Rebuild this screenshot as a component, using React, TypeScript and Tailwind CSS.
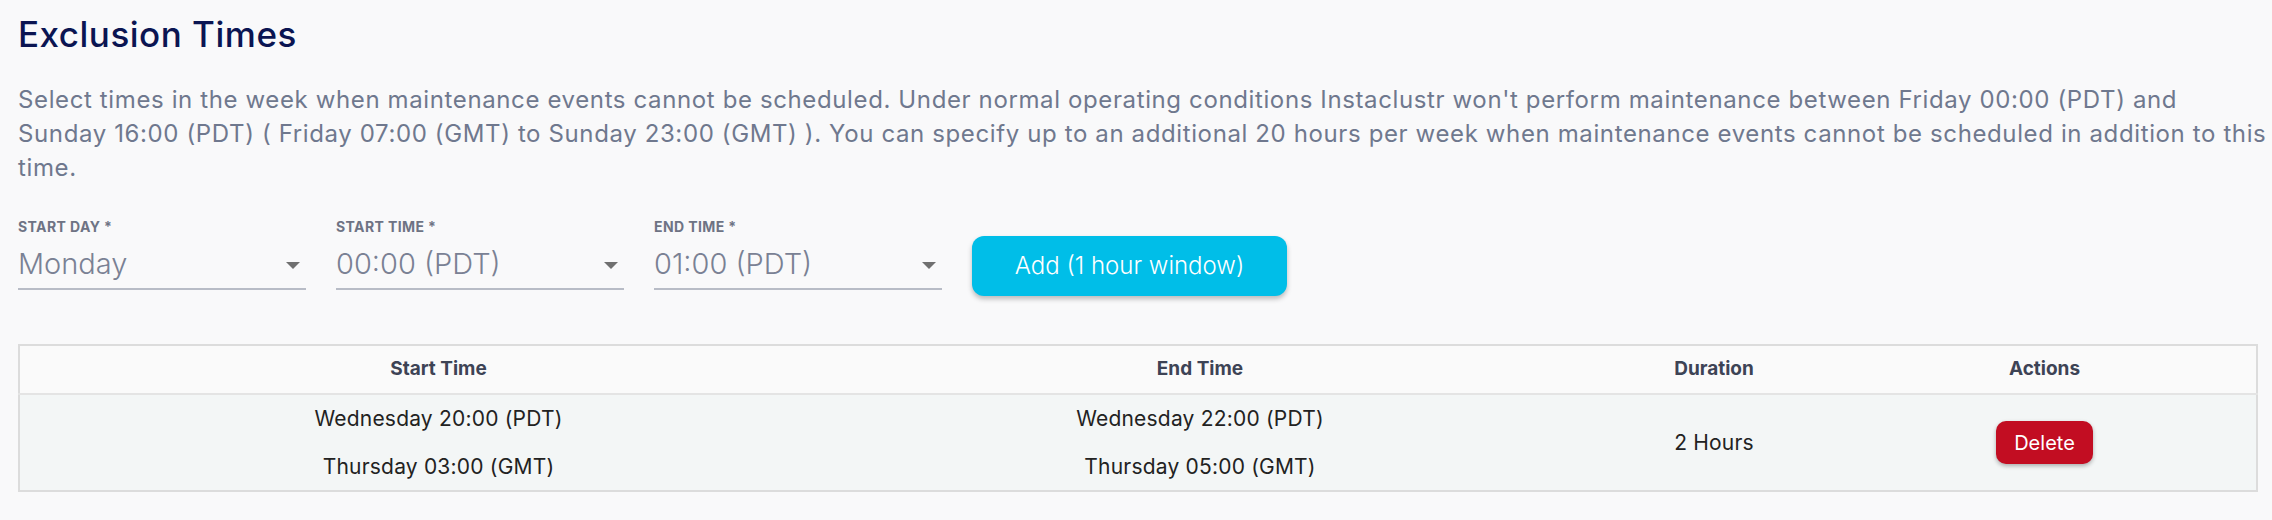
import { useState } from "react";

const font = { fontFamily: "Inter, 'Noto Sans', sans-serif" };

type Exclusion = {
  startLocal: string;
  startGmt: string;
  endLocal: string;
  endGmt: string;
  duration: string;
};

function SelectField({ label, value }: { label: string; value: string }) {
  return (
    <div className="w-[288px] flex flex-col">
      <span className="text-[14px] leading-[16px] font-bold uppercase text-[#6e7384] tracking-[0.4px]">
        {label}
      </span>
      <div className="mt-[11px] flex items-center justify-between border-b-2 border-[#b8bcc6] pb-[6px]">
        <span className="text-[29px] leading-[36px] font-light text-[#7a8194]">{value}</span>
        <svg width="14" height="7" viewBox="0 0 14 7" className="mr-[6px] mt-[2px]">
          <path d="M0 0 L14 0 L7 7 Z" fill="#707070" />
        </svg>
      </div>
    </div>
  );
}

export default function App() {
  const [rows, setRows] = useState<Exclusion[]>([
    {
      startLocal: "Wednesday 20:00 (PDT)",
      startGmt: "Thursday 03:00 (GMT)",
      endLocal: "Wednesday 22:00 (PDT)",
      endGmt: "Thursday 05:00 (GMT)",
      duration: "2 Hours",
    },
  ]);

  return (
    <div className="w-full h-[520px] bg-[#f9f9fa] pl-[18px] pt-[12px]" style={font}>
      <h1 className="text-[35px] leading-[44px] font-medium text-[#0b1552] tracking-[0.5px]">
        Exclusion Times
      </h1>
      <p className="mt-[27px] text-[24px] leading-[34px] text-[#6f788e] tracking-[0.62px]">
        Select times in the week when maintenance events cannot be scheduled. Under normal operating
        conditions Instaclustr won't perform maintenance between Friday 00:00 (PDT) and Sunday 16:00
        (PDT) ( Friday 07:00 (GMT) to Sunday 23:00 (GMT) ). You can specify up to an additional 20
        hours per week when maintenance events cannot be scheduled in addition to this time.
      </p>

      <div className="mt-[34px] flex items-start gap-[30px]">
        <SelectField label="Start Day *" value="Monday" />
        <SelectField label="Start Time *" value="00:00 (PDT)" />
        <SelectField label="End Time *" value="01:00 (PDT)" />
        <button
          className="mt-[17px] w-[315px] h-[60px] rounded-[12px] bg-[#00bee8] text-white text-[24px] font-light shadow-[0_3px_5px_rgba(0,0,0,0.25)]"
          onClick={() => setRows(rows)}
        >
          Add (1 hour window)
        </button>
      </div>

      <table className="mt-[48px] w-[2240px] table-fixed border-collapse border-2 border-[#dcdcdc]">
        <colgroup>
          <col className="w-[810px]" />
          <col className="w-[742px]" />
          <col className="w-[286px]" />
          <col className="w-[400px]" />
        </colgroup>
        <thead>
          <tr className="h-[49px] bg-[#fafafa] border-b-2 border-[#e4e4e4]">
            <th className="pl-[28px] text-[19px] font-bold text-[#3d4355]">Start Time</th>
            <th className="text-[19px] font-bold text-[#3d4355]">End Time</th>
            <th className="text-[19px] font-bold text-[#3d4355]">Duration</th>
            <th className="pr-[24px] text-[19px] font-bold text-[#3d4355]">Actions</th>
          </tr>
        </thead>
        <tbody>
          {rows.map((r, i) => (
            <tr key={i} className="h-[97px] bg-[#f3f6f6] text-[21px] tracking-[0.2px] text-[#222222]">
              <td className="pl-[28px] text-center">
                <div className="flex flex-col gap-[18px] leading-[30px]">
                  <span>{r.startLocal}</span>
                  <span>{r.startGmt}</span>
                </div>
              </td>
              <td className="text-center">
                <div className="flex flex-col gap-[18px] leading-[30px]">
                  <span>{r.endLocal}</span>
                  <span>{r.endGmt}</span>
                </div>
              </td>
              <td className="text-center">{r.duration}</td>
              <td className="pr-[24px] text-center">
                <button
                  className="w-[97px] h-[43px] rounded-[10px] bg-[#c20d22] text-white text-[20px] tracking-normal shadow-[0_2px_4px_rgba(0,0,0,0.3)]"
                  onClick={() => setRows(rows.filter((_, j) => j !== i))}
                >
                  Delete
                </button>
              </td>
            </tr>
          ))}
        </tbody>
      </table>
    </div>
  );
}
